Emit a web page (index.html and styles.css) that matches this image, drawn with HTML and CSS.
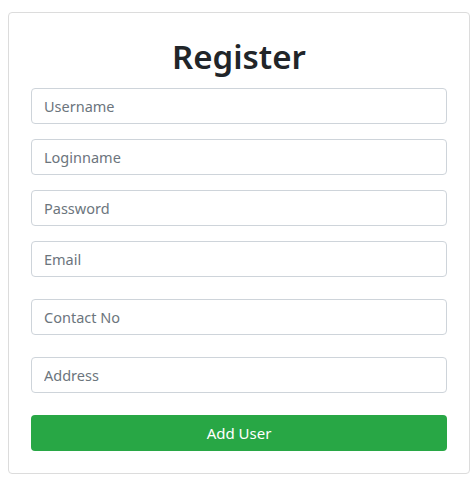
FILE: index.html
```html
<!DOCTYPE html>
<html lang="en">
<head>
    <meta charset="UTF-8">
    <meta name="viewport" content="width=device-width, initial-scale=1.0">
    <title>Register</title>
    <link rel="stylesheet" href="styles.css">
</head>
<body>
    <div class="card">
        <h1 class="title">Register</h1>
        <form class="register-form">
            <div class="group-top">
                <input type="text" class="field" placeholder="Username">
                <input type="text" class="field" placeholder="Loginname">
                <input type="password" class="field" placeholder="Password">
                <input type="email" class="field" placeholder="Email">
            </div>
            <div class="group-bottom">
                <input type="text" class="field" placeholder="Contact No">
                <input type="text" class="field" placeholder="Address">
                <button type="button" class="btn-add">Add User</button>
            </div>
        </form>
    </div>
</body>
</html>
```

FILE: styles.css
```css
body {
    margin: 0;
    padding: 12px 4px 8px 8px;
    font-family: "Noto Sans", "Open Sans", Arial, sans-serif;
    background: #fff;
}

.card {
    border: 1px solid #dcdcdc;
    border-radius: 4px;
    padding: 0 22px 22px 22px;
    height: 462px;
    box-sizing: border-box;
}

.title {
    margin: 0;
    padding-top: 24px;
    height: 75px;
    box-sizing: border-box;
    text-align: center;
    font-size: 33px;
    font-weight: 600;
    line-height: 1.2;
    color: #212529;
}

.register-form {
    display: flex;
    flex-direction: column;
    gap: 22px;
}

.group-top,
.group-bottom {
    display: flex;
    flex-direction: column;
}

.group-top {
    gap: 15px;
}

.group-bottom {
    gap: 22px;
}

.field {
    height: 36px;
    box-sizing: border-box;
    padding: 0 12px;
    border: 1px solid #ced4da;
    border-radius: 4px;
    font-family: inherit;
    font-size: 14.5px;
    color: #495057;
}

.field::placeholder {
    color: #6c757d;
}

.btn-add {
    height: 36px;
    border: none;
    border-radius: 4px;
    background-color: #28a745;
    color: #fff;
    font-family: inherit;
    font-size: 15px;
    cursor: pointer;
}
```
